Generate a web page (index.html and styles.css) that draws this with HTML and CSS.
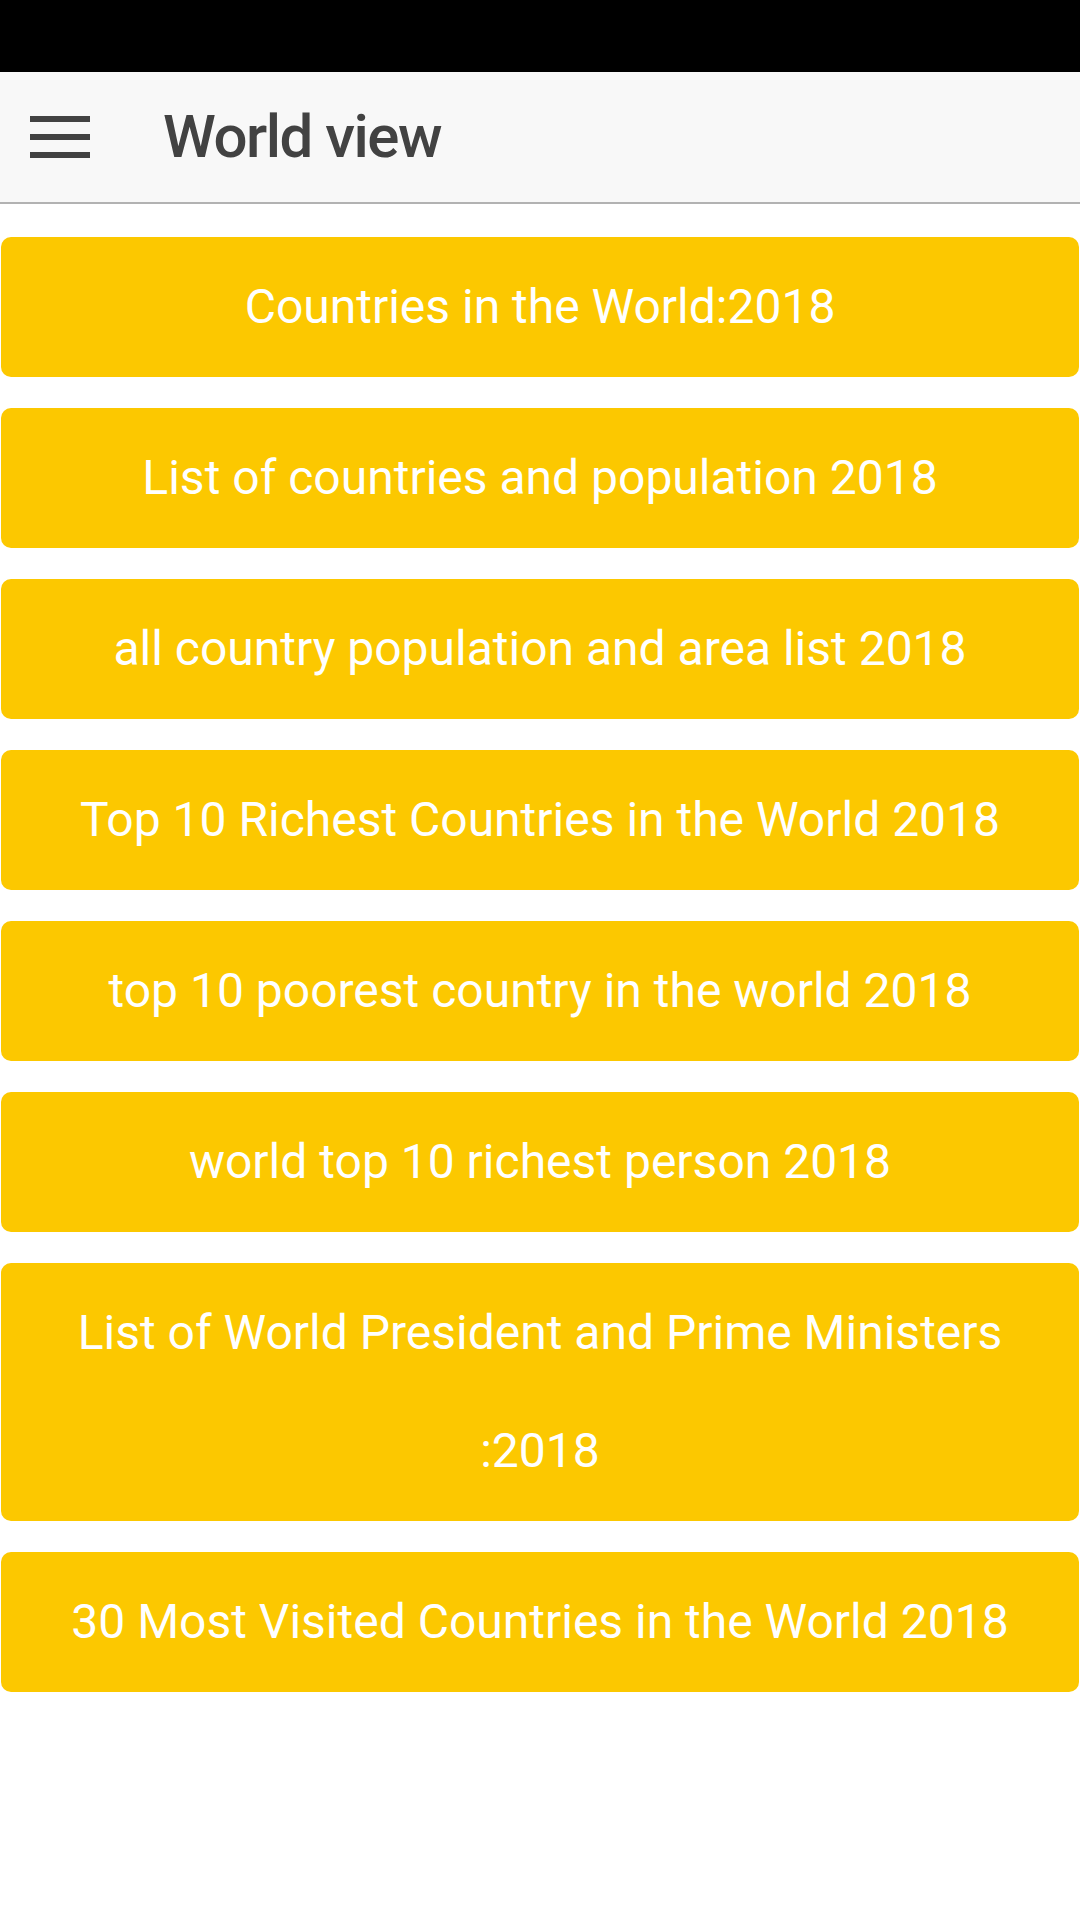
FILE: index.html
```html
<!DOCTYPE html>
<html lang="en">
<head>
    <meta charset="UTF-8">
    <meta name="viewport" content="width=device-width, initial-scale=1.0">
    <title>World view</title>
    <link rel="stylesheet" href="styles.css">
</head>
<body>
    <div class="statusBar"></div>

    <div class="toolbar">
        <div class="menuBtn">
            <span></span>
            <span></span>
            <span></span>
        </div>
        <h1 class="title">World view</h1>
    </div>

    <ul class="menuList">
        <li class="item">Countries in the World:2018</li>
        <li class="item">List of countries and population 2018</li>
        <li class="item">all country population and area list 2018</li>
        <li class="item">Top 10 Richest Countries in the World 2018</li>
        <li class="item">top 10 poorest country in the world 2018</li>
        <li class="item">world top 10 richest person 2018</li>
        <li class="item">List of World President and Prime Ministers :2018</li>
        <li class="item">30 Most Visited Countries in the World 2018</li>
    </ul>
</body>
</html>
```

FILE: styles.css
```css
* {
    margin: 0;
    padding: 0;
    list-style: none;
    box-sizing: border-box;
}

body {
    width: 1080px;
    min-height: 1920px;
    background-color: #fff;
    font-family: Roboto, "Noto Sans", "Liberation Sans", sans-serif;
}

.statusBar {
    height: 72px;
    background-color: #000;
}

.toolbar {
    display: flex;
    align-items: center;
    height: 132px;
    padding-left: 30px;
    background-color: #f8f8f8;
    border-bottom: 2px solid #b2b2b2;
}

.toolbar .menuBtn {
    display: flex;
    flex-direction: column;
    gap: 12px;
    width: 60px;
    margin-right: 73px;
}

.toolbar .menuBtn span {
    display: block;
    height: 6px;
    background-color: #424242;
}

.toolbar .title {
    font-size: 60px;
    font-weight: 500;
    color: #424242;
    line-height: 1;
    letter-spacing: -1.5px;
}

.menuList {
    display: flex;
    flex-direction: column;
    gap: 31px;
    padding: 33px 1px 0;
}

.menuList .item {
    padding: 11px 50px;
    border-radius: 10px;
    background-color: #fcc800;
    color: #fff;
    font-size: 48px;
    line-height: 118px;
    text-align: center;
}
```
